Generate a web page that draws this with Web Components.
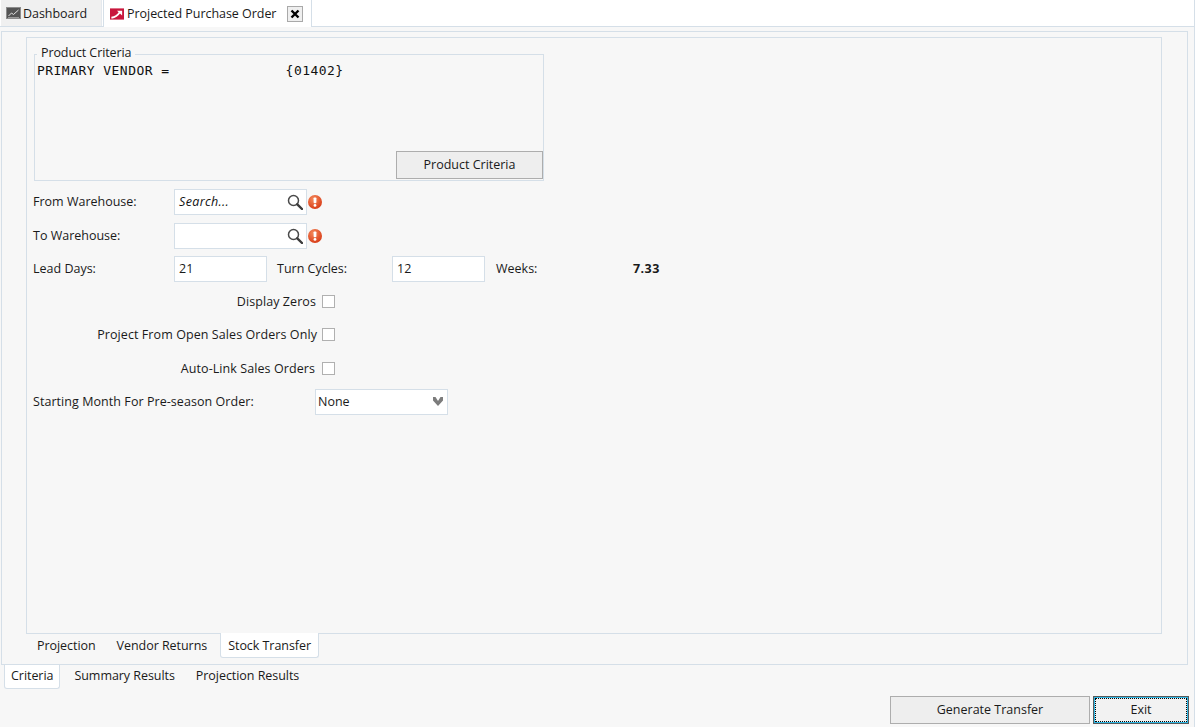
<!DOCTYPE html>
<html>
<head>
<meta charset="utf-8">
<title>Projected Purchase Order</title>
<style>
  html, body { margin: 0; height: 100%; overflow: hidden; }
  body { background: #f7f7f7; color: #1a1a1a; font: 12.5px "Open Sans", "Noto Sans", sans-serif; }
</style>
</head>
<body>
<erp-window>
  <doc-tabs slot="top"></doc-tabs>
  <outer-panel>
    <inner-panel>
      <criteria-box title="Product Criteria"></criteria-box>
      <lookup-row label="From Warehouse:" placeholder="Search..."></lookup-row>
      <lookup-row label="To Warehouse:" style="margin-top:8px"></lookup-row>
      <lead-row></lead-row>
      <check-row label="Display Zeros" style="margin-top:13px" gap="6"></check-row>
      <check-row label="Project From Open Sales Orders Only" style="margin-top:20px" gap="5"></check-row>
      <check-row label="Auto-Link Sales Orders" style="margin-top:21px" gap="7"></check-row>
      <month-row></month-row>
    </inner-panel>
    <tab-strip slot="tabs" tabs="Projection|Vendor Returns|Stock Transfer" active="2"></tab-strip>
  </outer-panel>
  <tab-strip slot="bottom" tabs="Criteria|Summary Results|Projection Results" active="0" small></tab-strip>
  <action-bar slot="actions"></action-bar>
</erp-window>

<script>
const FIELD = '#d5dfe8';

class ErpWindow extends HTMLElement {
  constructor() {
    super();
    this.attachShadow({mode: 'open'}).innerHTML = `
      <style>
        :host { display: flex; flex-direction: column; height: 727px; box-sizing: border-box; border-right: 1px solid #d5dfe8; }
        .body { padding: 4px 6px 0 1px; }
      </style>
      <slot name="top"></slot>
      <div class="body"><slot></slot></div>
      <slot name="bottom"></slot>
      <slot name="actions"></slot>`;
  }
}

class DocTabs extends HTMLElement {
  constructor() {
    super();
    this.attachShadow({mode: 'open'}).innerHTML = `
      <style>
        :host { display: flex; height: 27px; box-sizing: border-box; background: #fff; border-bottom: 1px solid #d5dfe8; padding-left: 1px; }
        .tab { display: flex; align-items: center; box-sizing: border-box; height: 26px; letter-spacing: -.04px; }
        .off { width: 101px; background: #f0f0f0; padding-left: 5px; border-right: 1px solid #e4e9ee; }
        .on { width: 209px; height: 27px; background: #fff; margin-left: 1px; padding-left: 6px; border: 1px solid #d5dfe8; border-width: 0 1px; position: relative; z-index: 1; }
        svg { display: block; flex: none; margin-right: 2px; }
        .close { width: 16px; height: 16px; box-sizing: border-box; margin-left: 11px; border: 1px solid #a9a9a9; background: #efefef; display: flex; align-items: center; justify-content: center; }
        .close svg { margin: 0; }
      </style>
      <div class="tab off">
        <svg width="15" height="12" viewBox="0 0 15 12"><rect width="15" height="12" fill="#555"/><rect x=".5" y=".5" width="14" height="11" fill="none" stroke="#8c8c8c"/><path d="M2.5 9 L5.5 6 L7.5 7.5 L12.5 3" stroke="#e2e2e2" fill="none"/><path d="M2 10.5H13" stroke="#9a9a9a"/></svg>
        <span>Dashboard</span>
      </div>
      <div class="tab on">
        <svg width="14" height="12" viewBox="0 0 15 12" style="margin-right:3px"><rect width="15" height="12" fill="#c8173d"/><path d="M1.5 10 C5 9.5 8 8 10.5 4.2" stroke="#fff" stroke-width="2" fill="none"/><path d="M7.5 2.6H13V7.5Z" fill="#fff"/></svg>
        <span>Projected Purchase Order</span>
        <div class="close"><svg width="10" height="10" viewBox="0 0 10 10"><path d="M1.5 1.5L8.5 8.5M8.5 1.5L1.5 8.5" stroke="#000" stroke-width="2.4"/></svg></div>
      </div>`;
  }
}

class OuterPanel extends HTMLElement {
  constructor() {
    super();
    this.attachShadow({mode: 'open'}).innerHTML = `
      <style>
        :host { display: block; box-sizing: border-box; height: 634px; border: 1px solid #d5dfe8; padding: 5px 25px 0 24px; }
      </style>
      <slot></slot>
      <slot name="tabs"></slot>`;
  }
}

class InnerPanel extends HTMLElement {
  constructor() {
    super();
    this.attachShadow({mode: 'open'}).innerHTML = `
      <style>
        :host { display: block; box-sizing: border-box; height: 597px; border: 1px solid #d5dfe8; padding: 10px 6px 0 6px; }
      </style>
      <slot></slot>`;
  }
}

class CriteriaBox extends HTMLElement {
  constructor() {
    super();
    const title = this.getAttribute('title');
    this.attachShadow({mode: 'open'}).innerHTML = `
      <style>
        :host { display: block; position: relative; box-sizing: border-box; width: 510px; height: 127px; margin: 6px 0 8px 1px; border: 1px solid #d5dfe8; }
        .legend { position: absolute; left: 2px; top: -10px; padding: 0 4px; background: #f7f7f7; line-height: 16px; letter-spacing: -.1px; }
        pre { margin: 0; position: absolute; left: 2px; top: 8px; color: #111; font: 13px/16px "DejaVu Sans Mono", monospace; letter-spacing: .46px; white-space: pre; }
        .wrap { position: absolute; right: 0; bottom: 1px; }
      </style>
      <div class="legend">${title}</div>
      <pre>PRIMARY VENDOR =              {01402}</pre>
      <div class="wrap"><flat-button label="${title}" width="147" height="28"></flat-button></div>`;
  }
}

class FlatButton extends HTMLElement {
  constructor() {
    super();
    const w = this.getAttribute('width'), h = this.getAttribute('height');
    const focus = this.hasAttribute('focus');
    this.attachShadow({mode: 'open'}).innerHTML = `
      <style>
        :host { display: block; }
        .b { box-sizing: border-box; width: ${w}px; height: ${h}px; padding-bottom: 2px; display: flex; align-items: center; justify-content: center; background: ${focus ? '#f2f2f2' : '#eeeeee'}; border: 1px solid #adadad; }
        .b.focus { border: 1px solid #5a5a5a; box-shadow: inset 0 0 0 1px #2fb8e6; position: relative; }
        .b.focus::after { content: ""; position: absolute; inset: 1px; border: 1px dotted #000; }
      </style>
      <div class="b ${focus ? 'focus' : ''}">${this.getAttribute('label')}</div>`;
  }
}

class LookupRow extends HTMLElement {
  constructor() {
    super();
    const ph = this.getAttribute('placeholder') || '';
    this.attachShadow({mode: 'open'}).innerHTML = `
      <style>
        :host { display: flex; align-items: center; height: 26px; }
        label { width: 141px; flex: none; padding-bottom: 2px; }
        .box { box-sizing: border-box; width: 133px; height: 26px; background: #fff; border: 1px solid ${FIELD}; display: flex; align-items: center; padding: 0 3px 0 4px; }
        .ph { flex: 1; font-style: italic; color: #111; letter-spacing: .35px; padding-bottom: 2px; }
        svg { display: block; flex: none; }
        .warn { margin-left: 1px; }
      </style>
      <label>${this.getAttribute('label')}</label>
      <div class="box">
        <span class="ph">${ph}</span>
        <svg width="16" height="16" viewBox="0 0 16 16"><circle cx="6.5" cy="6.5" r="5" fill="none" stroke="#4a4a4a" stroke-width="1.5"/><path d="M10.3 10.3L15 15" stroke="#3c3c3c" stroke-width="2.4" stroke-linecap="round"/></svg>
      </div>
      <svg class="warn" width="14" height="14" viewBox="0 0 15 15">
        <defs><radialGradient id="w" cx=".4" cy=".3" r=".8"><stop offset="0" stop-color="#f58a5c"/><stop offset="1" stop-color="#d5330f"/></radialGradient></defs>
        <circle cx="7.5" cy="7.5" r="7.5" fill="url(#w)"/>
        <rect x="6" y="2.6" width="3" height="6.2" rx="1" fill="#fff"/><circle cx="7.5" cy="11.2" r="1.5" fill="#fff"/>
      </svg>`;
  }
}

class LeadRow extends HTMLElement {
  constructor() {
    super();
    this.attachShadow({mode: 'open'}).innerHTML = `
      <style>
        :host { display: flex; align-items: center; height: 26px; margin-top: 7px; }
        span, b { flex: none; padding-bottom: 2px; box-sizing: border-box; }
        .f { box-sizing: border-box; height: 26px; background: #fff; border: 1px solid ${FIELD}; display: flex; align-items: center; padding: 0 0 2px 4px; }
        b { font-weight: 700; letter-spacing: .45px; }
      </style>
      <span style="width:141px">Lead Days:</span>
      <div class="f" style="width:93px">21</div>
      <span style="width:125px;padding-left:10px">Turn Cycles:</span>
      <div class="f" style="width:93px">12</div>
      <span style="width:148px;padding-left:11px">Weeks:</span>
      <b>7.33</b>`;
  }
}

class CheckRow extends HTMLElement {
  constructor() {
    super();
    this.attachShadow({mode: 'open'}).innerHTML = `
      <style>
        :host { display: flex; align-items: center; justify-content: flex-end; width: 302px; height: 13px; }
        span { margin-right: ${this.getAttribute('gap')}px; white-space: nowrap; letter-spacing: .08px; }
        i { display: block; flex: none; box-sizing: border-box; width: 13px; height: 13px; background: #fff; border: 1px solid #b0b0b0; }
      </style>
      <span>${this.getAttribute('label')}</span><i></i>`;
  }
}

class MonthRow extends HTMLElement {
  constructor() {
    super();
    this.attachShadow({mode: 'open'}).innerHTML = `
      <style>
        :host { display: flex; align-items: center; height: 26px; margin-top: 14px; }
        span { width: 282px; flex: none; padding-bottom: 2px; letter-spacing: .06px; }
        .s { box-sizing: border-box; width: 133px; height: 26px; background: #fff; border: 1px solid ${FIELD}; display: flex; align-items: center; justify-content: space-between; padding: 0 4px 2px 2px; }
        svg { display: block; margin-top: 1px; }
      </style>
      <span>Starting Month For Pre-season Order:</span>
      <div class="s">None
        <svg width="10" height="9" viewBox="0 0 10 9"><path d="M0 0H2.5L5 4L7.5 0H10V3.5L5 9L0 3.5Z" fill="#7c7c7c"/></svg>
      </div>`;
  }
}

class TabStrip extends HTMLElement {
  constructor() {
    super();
    const tabs = this.getAttribute('tabs').split('|');
    const active = +this.getAttribute('active');
    const small = this.hasAttribute('small');
    const items = tabs.map((t, i) => `<div class="t ${i === active ? 'on' : ''}">${t}</div>`).join('');
    this.attachShadow({mode: 'open'}).innerHTML = `
      <style>
        :host { display: flex; height: ${small ? 24 : 25}px; padding-left: ${small ? 4 : 3}px; ${small ? '' : 'margin-top: -1px;'} position: relative; letter-spacing: -.05px; }
        .t { box-sizing: border-box; height: ${small ? 24 : 25}px; display: flex; align-items: center; padding: 0 ${small ? '6px 3px' : '7px 0'}; margin-right: ${small ? 7 : 5}px; border: 1px solid transparent; border-top: 0; }
        .on { background: #fff; border-color: #d5dfe8; border-radius: 0 0 3px 3px; }
      </style>
      ${items}`;
  }
}

class ActionBar extends HTMLElement {
  constructor() {
    super();
    this.attachShadow({mode: 'open'}).innerHTML = `
      <style>
        :host { display: flex; justify-content: flex-end; gap: 3px; padding: 7px 5px 0 0; }
      </style>
      <flat-button label="Generate Transfer" width="200" height="28"></flat-button>
      <flat-button label="Exit" width="96" height="28" focus></flat-button>`;
  }
}

customElements.define('flat-button', FlatButton);
customElements.define('erp-window', ErpWindow);
customElements.define('doc-tabs', DocTabs);
customElements.define('outer-panel', OuterPanel);
customElements.define('inner-panel', InnerPanel);
customElements.define('criteria-box', CriteriaBox);
customElements.define('lookup-row', LookupRow);
customElements.define('lead-row', LeadRow);
customElements.define('check-row', CheckRow);
customElements.define('month-row', MonthRow);
customElements.define('tab-strip', TabStrip);
customElements.define('action-bar', ActionBar);
</script>
</body>
</html>
